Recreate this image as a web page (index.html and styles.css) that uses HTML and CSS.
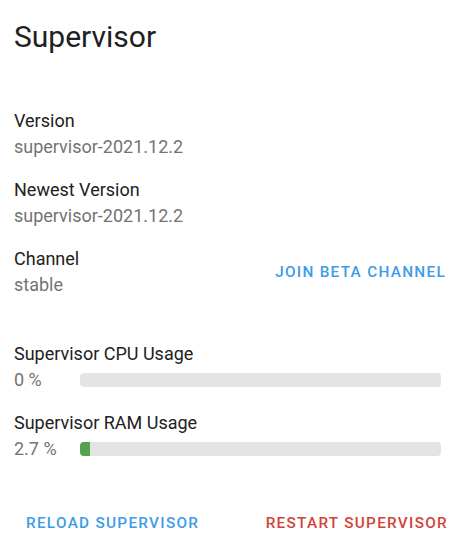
FILE: index.html
```html
<!DOCTYPE html>
<html lang="en">
<head>
    <meta charset="UTF-8">
    <meta name="viewport" content="width=device-width, initial-scale=1.0">
    <title>Supervisor</title>
    <link rel="stylesheet" href="styles.css">
</head>
<body>
    <div class="card">
        <h1 class="cardTitle">Supervisor</h1>
        <div class="info">
            <div class="row">
                <div class="rowText">
                    <div class="label">Version</div>
                    <div class="value">supervisor-2021.12.2</div>
                </div>
            </div>
            <div class="row">
                <div class="rowText">
                    <div class="label">Newest Version</div>
                    <div class="value">supervisor-2021.12.2</div>
                </div>
            </div>
            <div class="row">
                <div class="rowText">
                    <div class="label">Channel</div>
                    <div class="value">stable</div>
                </div>
                <button class="textBtn blue">Join beta channel</button>
            </div>
        </div>
        <div class="metrics">
            <div class="metric">
                <div class="label">Supervisor CPU Usage</div>
                <div class="meterRow">
                    <div class="value percent">0 %</div>
                    <div class="bar"><div class="fill" style="width: 0%"></div></div>
                </div>
            </div>
            <div class="metric">
                <div class="label">Supervisor RAM Usage</div>
                <div class="meterRow">
                    <div class="value percent">2.7 %</div>
                    <div class="bar"><div class="fill" style="width: 2.7%"></div></div>
                </div>
            </div>
        </div>
        <div class="actions">
            <button class="textBtn blue">Reload supervisor</button>
            <button class="textBtn red">Restart supervisor</button>
        </div>
    </div>
</body>
</html>
```

FILE: styles.css
```css
* {
    margin: 0;
    padding: 0;
    box-sizing: border-box;
}
body {
    background-color: #ffffff;
    font-family: Roboto, "Liberation Sans", sans-serif;
    color: #212121;
}
.card {
    padding: 17px 0 0 14px;
}
.cardTitle {
    font-size: 30px;
    font-weight: 400;
    line-height: 40px;
}
.info {
    margin-top: 51px;
    padding-right: 16px;
}
.row {
    display: flex;
    align-items: center;
    justify-content: space-between;
    margin-bottom: 17px;
}
.label {
    font-size: 18px;
    line-height: 26px;
}
.value {
    font-size: 18px;
    line-height: 26px;
    color: #737373;
}
.textBtn {
    background: none;
    border: 0;
    font-family: Roboto, "Liberation Sans", sans-serif;
    font-size: 15.3px;
    font-weight: 500;
    letter-spacing: 1.3px;
    text-transform: uppercase;
    padding: 8px 12px;
    cursor: pointer;
}
.blue {
    color: #3d9be9;
}
.red {
    color: #d04437;
}
.metrics {
    margin-top: 43px;
    padding-right: 33px;
}
.metric {
    margin-bottom: 17px;
}
.meterRow {
    display: flex;
    align-items: center;
}
.percent {
    width: 66px;
}
.bar {
    flex: 1;
    height: 14px;
    background-color: #e4e4e4;
    border-radius: 4px;
    overflow: hidden;
}
.fill {
    height: 100%;
    background-color: #55a14e;
}
.actions {
    display: flex;
    justify-content: space-between;
    margin-top: 44px;
    padding-right: 14px;
}
```
